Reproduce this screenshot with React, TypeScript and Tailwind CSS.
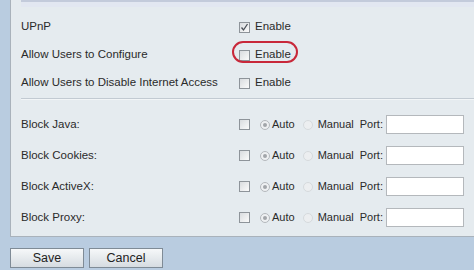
import React from "react";

const font = { fontFamily: '"Liberation Sans", Arial, sans-serif' };

function Checkbox({ checked = false }: { checked?: boolean }) {
  return (
    <span className="relative inline-flex h-[11px] w-[11px] shrink-0 items-center justify-center border border-[#8e949a] bg-gradient-to-br from-[#d9dcdf] to-[#fbfbfb]">
      {checked && (
        <svg width="9" height="9" viewBox="0 0 9 9" className="absolute left-[0px] top-[0px]">
          <path d="M1.5 4.5 L3.5 7 L7.5 1" fill="none" stroke="#4a5058" strokeWidth="1.3" />
        </svg>
      )}
    </span>
  );
}

function Radio({ selected = false, faint = false }: { selected?: boolean; faint?: boolean }) {
  if (faint) {
    return <span className="inline-block h-[10px] w-[10px] shrink-0 rounded-full border border-[#d6dadd] bg-[#eceef0]" />;
  }
  return (
    <span className="inline-flex h-[10px] w-[10px] shrink-0 items-center justify-center rounded-full border border-[#b4b8bc] bg-[#eef0f2]">
      {selected && <span className="h-[4px] w-[4px] rounded-full bg-[#a2a6aa]" />}
    </span>
  );
}

function EnableRow({ label, checked, circled }: { label: string; checked?: boolean; circled?: boolean }) {
  return (
    <div className="flex h-[28px] items-center">
      <div className="w-[218px] shrink-0">{label}</div>
      <div className="relative flex items-center gap-[5px]">
        <Checkbox checked={checked} />
        <span>Enable</span>
        {circled && (
          <span className="absolute left-[-7px] top-[-5px] h-[22px] w-[66px] rounded-[11px] border-2 border-[#c8283a]" />
        )}
      </div>
    </div>
  );
}

function BlockRow({ label }: { label: string }) {
  return (
    <div className="flex h-[31px] items-center">
      <div className="w-[218px] shrink-0">{label}</div>
      <div className="flex items-center text-[11px]">
        <Checkbox />
        <span className="ml-[10px] flex"><Radio selected /></span>
        <span className="ml-[2px]">Auto</span>
        <span className="ml-[8px] flex"><Radio faint /></span>
        <span className="ml-[5px]">Manual</span>
        <span className="ml-[6px]">Port:</span>
        <span className="ml-[3px] h-[19px] w-[78px] border border-[#b4b8bc] bg-white" />
      </div>
    </div>
  );
}

export default function App() {
  return (
    <div className="relative h-[270px] w-[474px] overflow-hidden bg-[#b9cce0] text-[11.5px] text-[#2a2a2a]" style={font}>
      <div className="ml-[10px] flex h-[237px] flex-col border-b border-l border-[#a9b2bb] bg-[#e5ebef]">
        <div className="flex">
          <div className="w-[10px]" />
          <div className="flex-1">
            <div className="h-[2px] bg-[#c3cbdb]" />
            <div className="h-[5px] bg-[#e2e7f1]" />
          </div>
        </div>
        <div className="pl-[10px] pt-[6px]">
          <EnableRow label="UPnP" checked />
          <EnableRow label="Allow Users to Configure" circled />
          <EnableRow label="Allow Users to Disable Internet Access" />
        </div>
        <div className="ml-[10px] mt-[1px] h-[1px] bg-[#c2cad2]" />
        <div className="ml-[10px] h-[1px] bg-[#f2f5f7]" />
        <div className="pl-[10px] pt-[9px]">
          <BlockRow label="Block Java:" />
          <BlockRow label="Block Cookies:" />
          <BlockRow label="Block ActiveX:" />
          <BlockRow label="Block Proxy:" />
        </div>
      </div>
      <div className="ml-[10px] mt-[11px] flex gap-[5px]">
        <button className="h-[20px] w-[74px] border border-[#7f8b96] bg-gradient-to-b from-[#f6f8f9] to-[#d6dce1] text-[12.5px] text-[#222]" style={font}>
          Save
        </button>
        <button className="h-[20px] w-[74px] border border-[#7f8b96] bg-gradient-to-b from-[#f6f8f9] to-[#d6dce1] text-[12.5px] text-[#222]" style={font}>
          Cancel
        </button>
      </div>
    </div>
  );
}
